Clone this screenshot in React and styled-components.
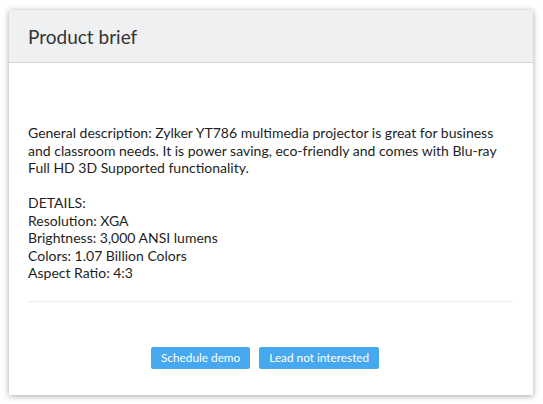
import React from 'react';
import styled, { createGlobalStyle } from 'styled-components';

const GlobalStyle = createGlobalStyle`
  body {
    margin: 0;
    background: #ffffff;
    font-family: Lato, "Open Sans", sans-serif;
    color: #222222;
  }
`;

const Page = styled.div`
  padding: 10px 10px 9px 9px;
`;

const Card = styled.div`
  width: 524px;
  height: 385px;
  background: #ffffff;
  box-shadow: 0 1px 6px rgba(0, 0, 0, 0.35);
  display: flex;
  flex-direction: column;
`;

const Header = styled.div`
  height: 53px;
  flex-shrink: 0;
  display: flex;
  align-items: center;
  padding-left: 19px;
  background: #eff0f2;
  border-bottom: 1px solid #d3d4d6;
  box-sizing: border-box;
  font-size: 19px;
  color: #333333;
`;

const Body = styled.div`
  padding: 61px 20px 0 19px;
  font-size: 14px;
  line-height: 17.5px;
  color: #1e1e1e;
`;

const Paragraph = styled.p`
  margin: 0 0 17.5px;
`;

const Details = styled.div`
  display: flex;
  flex-direction: column;
`;

const Divider = styled.hr`
  margin: 19px 0 0 0;
  border: 0;
  border-top: 1px solid #ececec;
`;

const Actions = styled.div`
  display: flex;
  gap: 9px;
  padding: 45px 0 0 142px;
`;

const ActionButton = styled.button`
  height: 22px;
  padding: 0 10px;
  border: 0;
  border-radius: 2px;
  background: #46a9f0;
  color: #ffffff;
  font-family: Lato, "Open Sans", sans-serif;
  font-size: 11.8px;
`;

const description = [
  'General description: Zylker YT786 multimedia projector is great for business',
  'and classroom needs. It is power saving, eco-friendly and comes with Blu-ray',
  'Full HD 3D Supported functionality.',
];

const details = [
  'DETAILS:',
  'Resolution: XGA',
  'Brightness: 3,000 ANSI lumens',
  'Colors: 1.07 Billion Colors',
  'Aspect Ratio: 4:3',
];

const App = () => (
  <Page>
    <GlobalStyle />
    <Card>
      <Header>Product brief</Header>
      <Body>
        <Paragraph>
          {description.map((line, i) => (
            <React.Fragment key={line}>
              {line}
              {i < description.length - 1 && <br />}
            </React.Fragment>
          ))}
        </Paragraph>
        <Details>
          {details.map((line) => <span key={line}>{line}</span>)}
        </Details>
        <Divider />
      </Body>
      <Actions>
        <ActionButton>Schedule demo</ActionButton>
        <ActionButton>Lead not interested</ActionButton>
      </Actions>
    </Card>
  </Page>
);

export default App;
